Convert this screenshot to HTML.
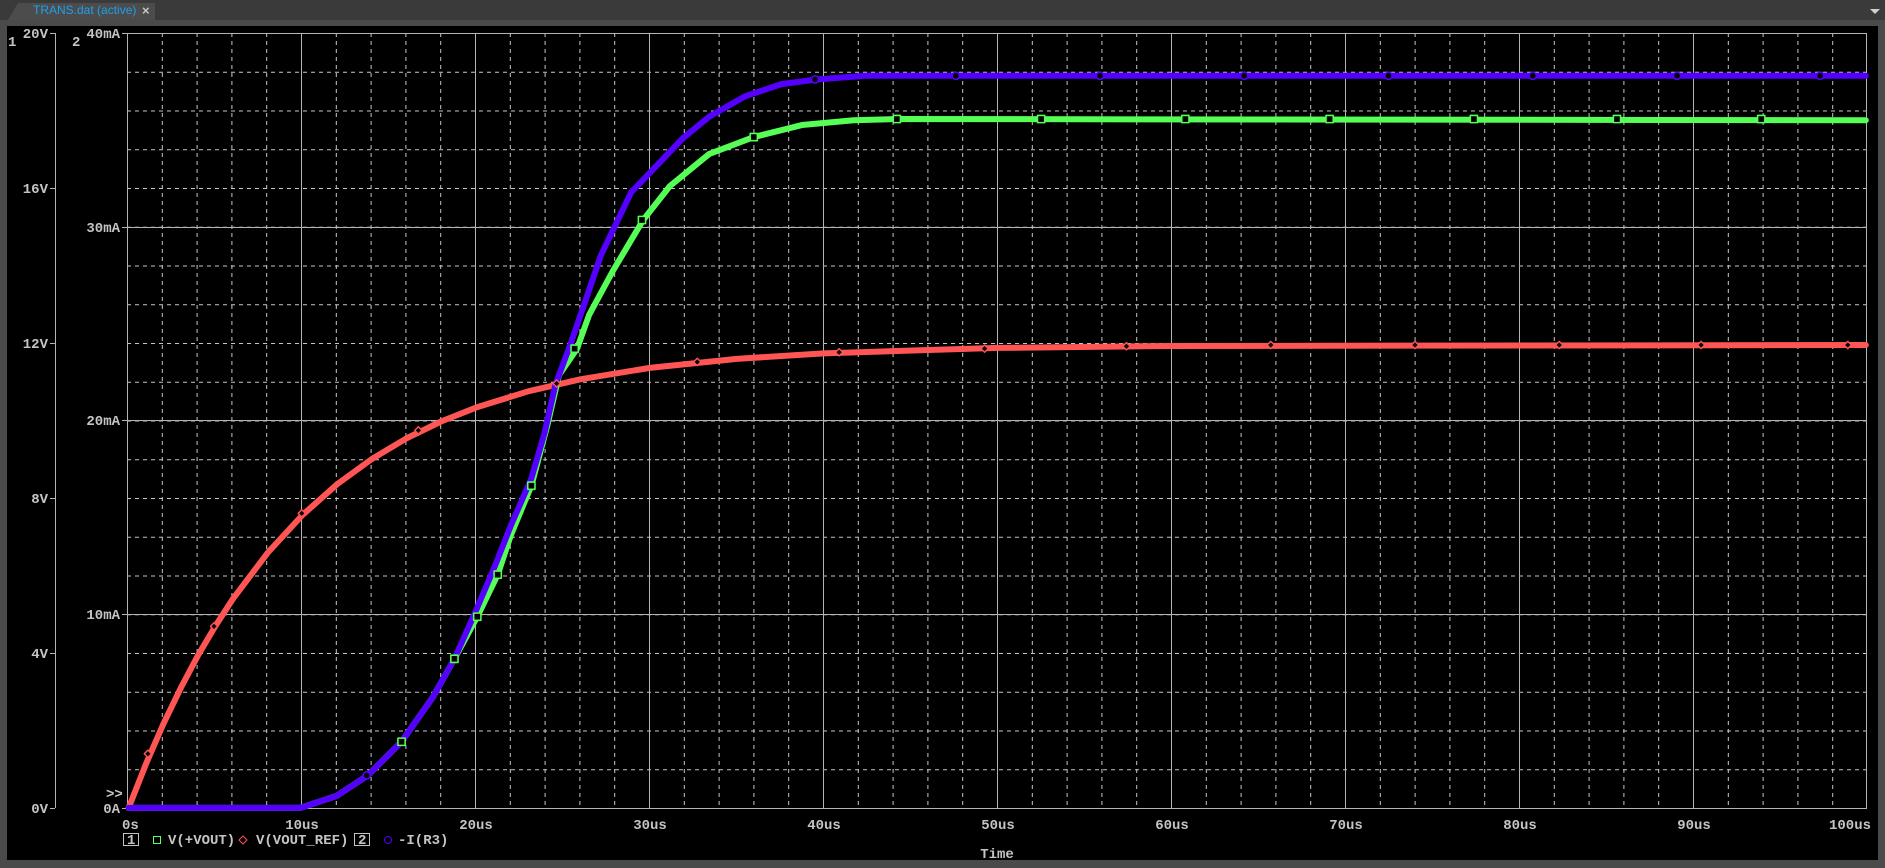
<!DOCTYPE html>
<html><head><meta charset="utf-8"><style>
html,body{margin:0;padding:0;background:#3b3b3b;width:1885px;height:868px;overflow:hidden}
svg{display:block}
text{font-family:"Liberation Mono",monospace;font-weight:bold;font-size:14px;fill:#c4c4c4}
</style></head><body>
<svg width="1885" height="868" viewBox="0 0 1885 868">
<defs>
<pattern id="dh" patternUnits="userSpaceOnUse" x="127" y="33" width="8" height="38.75"><rect x="0" y="0" width="4" height="1" fill="#c8c8c8"/></pattern>
<pattern id="dv" patternUnits="userSpaceOnUse" x="127" y="33" width="34.8" height="8"><rect x="0" y="0" width="1" height="4" fill="#c8c8c8"/></pattern>
</defs>
<rect x="0" y="0" width="1885" height="20" fill="#3a3a3a"/>
<path d="M8 20 L18 3 L155 3 L155 20 Z" fill="#4c4c4c"/>
<text x="33" y="14" style="font-family:'Liberation Sans',sans-serif;font-weight:normal;font-size:12px;fill:#1ea0ec">TRANS.dat (active)</text>
<text x="142" y="15" style="font-family:'Liberation Sans',sans-serif;font-size:13px;fill:#c8c8c8">×</text>
<path d="M1870 9 L1880 9 L1875 14 Z" fill="#cfcfcf"/>
<rect x="0" y="20" width="1885" height="848" fill="#4a4a4a"/>
<rect x="7" y="26" width="1871" height="834" fill="#000"/>
<rect x="127" y="33" width="1740" height="775" fill="url(#dh)"/>
<rect x="127" y="33" width="1740" height="775" fill="url(#dv)"/>
<g stroke="#b4b4b4" stroke-width="1">
<line x1="127" y1="33.5" x2="1867" y2="33.5"/>
<line x1="127" y1="227.5" x2="1867" y2="227.5"/>
<line x1="127" y1="420.5" x2="1867" y2="420.5"/>
<line x1="127" y1="614.5" x2="1867" y2="614.5"/>
<line x1="127" y1="808.5" x2="1867" y2="808.5"/>
<line x1="127.5" y1="33" x2="127.5" y2="808"/>
<line x1="301.5" y1="33" x2="301.5" y2="808"/>
<line x1="475.5" y1="33" x2="475.5" y2="808"/>
<line x1="649.5" y1="33" x2="649.5" y2="808"/>
<line x1="823.5" y1="33" x2="823.5" y2="808"/>
<line x1="997.5" y1="33" x2="997.5" y2="808"/>
<line x1="1171.5" y1="33" x2="1171.5" y2="808"/>
<line x1="1345.5" y1="33" x2="1345.5" y2="808"/>
<line x1="1519.5" y1="33" x2="1519.5" y2="808"/>
<line x1="1693.5" y1="33" x2="1693.5" y2="808"/>
<line x1="1866.5" y1="33" x2="1866.5" y2="808"/>
<line x1="55.5" y1="33" x2="55.5" y2="808"/>
<line x1="50" y1="33.5" x2="55" y2="33.5"/>
<line x1="50" y1="188.5" x2="55" y2="188.5"/>
<line x1="50" y1="343.5" x2="55" y2="343.5"/>
<line x1="50" y1="498.5" x2="55" y2="498.5"/>
<line x1="50" y1="653.5" x2="55" y2="653.5"/>
<line x1="50" y1="808.5" x2="55" y2="808.5"/>
<line x1="122" y1="33.5" x2="127" y2="33.5"/>
<line x1="122" y1="227.5" x2="127" y2="227.5"/>
<line x1="122" y1="420.5" x2="127" y2="420.5"/>
<line x1="122" y1="614.5" x2="127" y2="614.5"/>
<line x1="122" y1="808.5" x2="127" y2="808.5"/>
</g>
<g text-anchor="end">
<text x="48" y="38">20V</text><text x="48" y="193">16V</text><text x="48" y="348">12V</text>
<text x="48" y="503">8V</text><text x="48" y="658">4V</text><text x="48" y="813">0V</text>
<text x="120" y="38">40mA</text><text x="120" y="232">30mA</text><text x="120" y="425">20mA</text>
<text x="120" y="619">10mA</text><text x="120" y="813">0A</text>
</g>
<text x="8" y="46">1</text><text x="72" y="46">2</text>
<text x="106" y="798">&gt;&gt;</text>
<text x="122" y="829">0s</text>
<g text-anchor="middle">
<text x="302" y="829">10us</text><text x="476" y="829">20us</text>
<text x="650" y="829">30us</text><text x="824" y="829">40us</text><text x="998" y="829">50us</text>
<text x="1172" y="829">60us</text><text x="1346" y="829">70us</text><text x="1520" y="829">80us</text>
<text x="1694" y="829">90us</text><text x="1850" y="829">100us</text>
<text x="997" y="858">Time</text>
</g>
<rect x="123.5" y="833.5" width="15" height="12" fill="none" stroke="#c4c4c4"/>
<text x="127" y="844">1</text>
<rect x="153.5" y="836.5" width="7" height="7" fill="none" stroke="#5cff5c"/>
<text x="168" y="844">V(+VOUT)</text>
<path d="M243 836 L247 840 L243 844 L239 840 Z" fill="none" stroke="#ff5555"/>
<text x="256" y="844">V(VOUT_REF)</text>
<rect x="354.5" y="833.5" width="15" height="12" fill="none" stroke="#c4c4c4"/>
<text x="358" y="844">2</text>
<circle cx="388" cy="840" r="3.5" fill="none" stroke="#5500ff"/>
<text x="398" y="844">-I(R3)</text>
<g transform="scale(1.2022)" fill="none" stroke-linejoin="round" stroke-linecap="round">
<polyline stroke="#ff5555" stroke-width="5" points="107,672 121.5,635.3 135.9,602.2 150.4,572.2 164.8,545 179.3,520.5 193.7,498.2 222.6,459.9 251.5,428.5 280.4,402.8 309.3,381.8 338.2,364.6 367.1,350.5 396,339 439.4,325.5 482.7,315.5 540.5,306 612.8,298.5 685,293.9 829.5,289.4 974,287.8 1552,287"/>
<polyline stroke="#55ff55" stroke-width="5" points="107,672 250,672 280,662 306,645 334,617 360,580 378,548 397,513 414,478 425,445 442,404 455,355 465,312 480,290 490,262 510,225 535,183 557,155 590,128 627,114 667,104 710,100 746,99 1552,100"/>
<polyline stroke="#5500ff" stroke-width="5" points="107,672 250,672 280,662 306,645 334,617 360,580 378,548 395,510 412,470 425,437 442,398 453,360 462,320 475,285 500,212 525,160 547,137 568,115 590,97 620,80 650,70 680,66 720,63 1552,63"/>
<g stroke="#55ff55" stroke-width="1.3" fill="#000">
<rect x="331" y="614" width="6" height="6"/><rect x="375" y="545" width="6" height="6"/><rect x="394" y="510" width="6" height="6"/><rect x="411" y="475" width="6" height="6"/><rect x="439" y="401" width="6" height="6"/><rect x="475" y="287" width="6" height="6"/><rect x="531" y="180" width="6" height="6"/><rect x="624" y="111" width="6" height="6"/><rect x="743" y="96" width="6" height="6"/><rect x="863" y="96" width="6" height="6"/><rect x="983" y="96" width="6" height="6"/><rect x="1103" y="96" width="6" height="6"/><rect x="1223" y="96" width="6" height="6"/><rect x="1342" y="96" width="6" height="6"/><rect x="1462" y="96" width="6" height="6"/>
</g>
<g stroke="#5500ff" stroke-width="1.3" fill="#000">
<circle cx="305" cy="645" r="3"/><circle cx="678" cy="66" r="3"/><circle cx="795" cy="63" r="3"/><circle cx="915" cy="63" r="3"/><circle cx="1035" cy="63" r="3"/><circle cx="1155" cy="63" r="3"/><circle cx="1275" cy="63" r="3"/><circle cx="1395" cy="63" r="3"/><circle cx="1514" cy="63" r="3"/>
</g>
<g stroke="#ff5555" stroke-width="1.2" fill="#000">
<path d="M123 624 L126 627 L123 630 L120 627Z"/><path d="M178 518 L181 521 L178 524 L175 521Z"/><path d="M251 424 L254 427 L251 430 L248 427Z"/><path d="M348 355 L351 358 L348 361 L345 358Z"/><path d="M463 316 L466 319 L463 322 L460 319Z"/><path d="M580 298 L583 301 L580 304 L577 301Z"/><path d="M698 290 L701 293 L698 296 L695 293Z"/><path d="M819 287 L822 290 L819 293 L816 290Z"/><path d="M937 285 L940 288 L937 291 L934 288Z"/><path d="M1057 284 L1060 287 L1057 290 L1054 287Z"/><path d="M1177 284 L1180 287 L1177 290 L1174 287Z"/><path d="M1297 284 L1300 287 L1297 290 L1294 287Z"/><path d="M1415 284 L1418 287 L1415 290 L1412 287Z"/><path d="M1537 284 L1540 287 L1537 290 L1534 287Z"/>
</g>
</g>
</svg>
</body></html>
